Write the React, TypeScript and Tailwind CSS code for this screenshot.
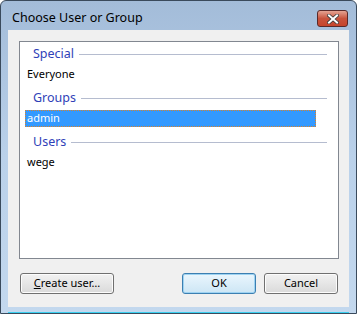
import React from "react";

const font = { fontFamily: '"Noto Sans", "Open Sans", Arial, sans-serif' };

function Header({ label }: { label: string }) {
  return (
    <div className="h-[23px] flex items-center pl-[13px] pr-[11px] gap-[5px]">
      <span className="text-[12.5px] text-[#2f3fb8] leading-none">{label}</span>
      <div className="flex-1 h-px bg-[#b5bccf]" />
    </div>
  );
}

function Item({ label, selected }: { label: string; selected?: boolean }) {
  return (
    <div className="h-[21px] pl-[5px] pr-[22px]">
      {selected ? (
        <div className="h-[17px] flex items-center pl-[1px] bg-[#3399ff] border border-dotted border-[#d9822b] text-white text-[11px]">
          {label}
        </div>
      ) : (
        <div className="h-[17px] flex items-center pl-[2px] text-black text-[11px]">{label}</div>
      )}
    </div>
  );
}

function Btn({ children, w, focus }: { children: React.ReactNode; w: string; focus?: boolean }) {
  return (
    <button
      className={
        w +
        " h-[21px] rounded-[3px] border text-[11px] text-black flex items-center justify-center " +
        (focus
          ? "border-[#3c7fb1] bg-gradient-to-b from-[#eaf6fd] to-[#cde6f5] shadow-[inset_0_0_0_1px_#9ed3f2]"
          : "border-[#707070] bg-gradient-to-b from-[#f2f2f2] to-[#dadada] shadow-[inset_0_0_0_1px_#fcfcfc]")
      }
    >
      {children}
    </button>
  );
}

export default function App() {
  return (
    <div
      style={font}
      className="w-[357px] h-[314px] flex flex-col border border-[#3a4a5c] rounded-t-[6px] bg-gradient-to-b from-[#a3bcd9] via-[#bad1ea] to-[#c3d8ee] px-[7px] pb-[6px] overflow-hidden"
    >
      <div className="h-[29px] flex items-center justify-between pt-[6px] pl-[4px] pr-[1px]">
        <span className="text-[12.5px] text-black">Choose User or Group</span>
        <div className="w-[31px] h-[17px] rounded-[3px] border border-[#5a2a2a] bg-gradient-to-b from-[#e4a393] via-[#c8533d] to-[#c6452c] flex items-center justify-center">
          <svg width="12" height="10" viewBox="0 0 12 10">
            <path d="M2 1.5 L10 8.5 M10 1.5 L2 8.5" stroke="#3b3b3b" strokeWidth="3.6" strokeLinecap="square" />
            <path d="M2 1.5 L10 8.5 M10 1.5 L2 8.5" stroke="#ffffff" strokeWidth="2" strokeLinecap="square" />
          </svg>
        </div>
      </div>
      <div className="flex-1 bg-[#f0f0f0] flex flex-col pt-[11px] pl-[11px] pr-[10px]">
        <div className="h-[218px] bg-white border border-[#828790] pt-px">
          <Header label="Special" />
          <Item label="Everyone" />
          <Header label="Groups" />
          <Item label="admin" selected />
          <Header label="Users" />
          <Item label="wege" />
        </div>
        <div className="mt-[14px] flex items-center pl-px">
          <Btn w="w-[94px]">
            <span>
              <span className="underline">C</span>reate user…
            </span>
          </Btn>
          <div className="flex-1" />
          <Btn w="w-[74px]" focus>
            OK
          </Btn>
          <div className="w-[8px]" />
          <Btn w="w-[74px]">Cancel</Btn>
          <div className="w-px" />
        </div>
      </div>
      <div className="h-px bg-[#3bd0f0] -mb-[6px] mt-[5px]" />
    </div>
  );
}
